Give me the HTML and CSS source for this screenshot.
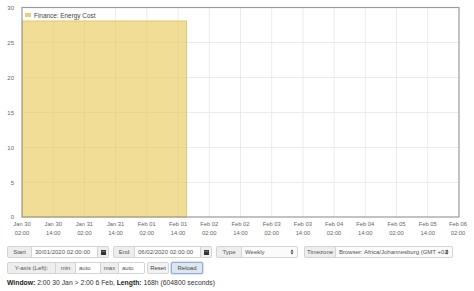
FILE: index.html
```html
<!DOCTYPE html>
<html>
<head>
<meta charset="utf-8">
<link rel="stylesheet" href="styles.css">
</head>
<body>
<svg class="chart" width="474" height="242" viewBox="0 0 474 242">
  <g class="grid">
    <line x1="53.2" y1="7" x2="53.2" y2="217"/><line x1="84.4" y1="7" x2="84.4" y2="217"/>
    <line x1="115.6" y1="7" x2="115.6" y2="217"/><line x1="146.8" y1="7" x2="146.8" y2="217"/>
    <line x1="178.1" y1="7" x2="178.1" y2="217"/><line x1="209.3" y1="7" x2="209.3" y2="217"/>
    <line x1="240.5" y1="7" x2="240.5" y2="217"/><line x1="271.7" y1="7" x2="271.7" y2="217"/>
    <line x1="302.9" y1="7" x2="302.9" y2="217"/><line x1="334.1" y1="7" x2="334.1" y2="217"/>
    <line x1="365.3" y1="7" x2="365.3" y2="217"/><line x1="396.5" y1="7" x2="396.5" y2="217"/>
    <line x1="427.7" y1="7" x2="427.7" y2="217"/>
    <line x1="22" y1="42.5" x2="459" y2="42.5"/><line x1="22" y1="77.5" x2="459" y2="77.5"/>
    <line x1="22" y1="112.5" x2="459" y2="112.5"/><line x1="22" y1="147.5" x2="459" y2="147.5"/>
    <line x1="22" y1="182.5" x2="459" y2="182.5"/>
  </g>
  <rect class="bar" x="22.5" y="21" width="164" height="196"/>
  <rect class="frame" x="22" y="7.5" width="437" height="209.5"/>
  <g class="legend">
    <rect class="legend-bg" x="23" y="9" width="68" height="11"/>
    <rect class="legend-swatch" x="25" y="13" width="6" height="4"/>
    <text class="legend-text" x="34" y="15.3">Finance: Energy Cost</text>
  </g>
  <g class="ylabels">
    <text x="14" y="8">30</text><text x="14" y="43">25</text><text x="14" y="78">20</text>
    <text x="14" y="113">15</text><text x="14" y="148">10</text><text x="14" y="183">5</text>
    <text x="14" y="217">0</text>
  </g>
  <g class="xlabels">
    <text x="22" y="224">Jan 30</text><text x="22" y="233">02:00</text>
    <text x="53.2" y="224">Jan 30</text><text x="53.2" y="233">14:00</text>
    <text x="84.4" y="224">Jan 31</text><text x="84.4" y="233">02:00</text>
    <text x="115.6" y="224">Jan 31</text><text x="115.6" y="233">14:00</text>
    <text x="146.8" y="224">Feb 01</text><text x="146.8" y="233">02:00</text>
    <text x="178.1" y="224">Feb 01</text><text x="178.1" y="233">14:00</text>
    <text x="209.3" y="224">Feb 02</text><text x="209.3" y="233">02:00</text>
    <text x="240.5" y="224">Feb 02</text><text x="240.5" y="233">14:00</text>
    <text x="271.7" y="224">Feb 03</text><text x="271.7" y="233">02:00</text>
    <text x="302.9" y="224">Feb 03</text><text x="302.9" y="233">14:00</text>
    <text x="334.1" y="224">Feb 04</text><text x="334.1" y="233">02:00</text>
    <text x="365.3" y="224">Feb 04</text><text x="365.3" y="233">14:00</text>
    <text x="396.5" y="224">Feb 05</text><text x="396.5" y="233">02:00</text>
    <text x="427.7" y="224">Feb 05</text><text x="427.7" y="233">14:00</text>
    <text x="458" y="224">Feb 06</text><text x="458" y="233">02:00</text>
  </g>
</svg>
<div class="controls">
  <div class="row">
    <div class="group">
      <span class="addon w-start">Start</span>
      <span class="field w-date">30/01/2020 02:00:00</span>
      <span class="addon icon-btn"><svg width="5" height="5" viewBox="0 0 5 5"><rect x="0" y="0" width="5" height="5" fill="#333"/><rect x="0.5" y="1.5" width="4" height="0.4" fill="#ccc"/></svg></span>
    </div>
    <div class="group">
      <span class="addon w-end">End</span>
      <span class="field w-date">06/02/2020 02:00:00</span>
      <span class="addon icon-btn"><svg width="5" height="5" viewBox="0 0 5 5"><rect x="0" y="0" width="5" height="5" fill="#333"/><rect x="0.5" y="1.5" width="4" height="0.4" fill="#ccc"/></svg></span>
    </div>
    <div class="group g-type">
      <span class="addon w-type">Type</span>
      <span class="field select w-weekly">Weekly<svg class="arrows" width="4" height="6" viewBox="0 0 4 6"><path d="M0.5 2.4 L2 0.6 L3.5 2.4 Z M0.5 3.6 L2 5.4 L3.5 3.6 Z" fill="#333"/></svg></span>
    </div>
    <div class="group g-tz">
      <span class="addon w-tz">Timezone</span>
      <span class="field select w-tzsel">Browser: Africa/Johannesburg (GMT +02<svg class="arrows" width="4" height="6" viewBox="0 0 4 6"><path d="M0.5 2.4 L2 0.6 L3.5 2.4 Z M0.5 3.6 L2 5.4 L3.5 3.6 Z" fill="#333"/></svg></span>
    </div>
  </div>
  <div class="row">
    <div class="group">
      <span class="addon w-yaxis">Y-axis (Left):</span>
      <span class="addon w-min">min</span>
      <span class="field w-auto1">auto</span>
      <span class="addon w-max">max</span>
      <span class="field w-auto2">auto</span>
    </div>
    <span class="btn w-reset">Reset</span>
    <span class="btn btn-active w-reload">Reload</span>
  </div>
  <p class="window"><b>Window:</b> 2:00 30 Jan &gt; 2:00 6 Feb, <b>Length:</b> 168h (604800 seconds)</p>
</div>
</body>
</html>
```
FILE: styles.css
```css
html, body {
  margin: 0;
  padding: 0;
  background: #fff;
  font-family: "Liberation Sans", Arial, sans-serif;
}
.chart {
  display: block;
}
.grid line {
  stroke: #e6e6e6;
  stroke-width: 0.8;
}
.bar {
  fill: #e8c44a;
  fill-opacity: 0.58;
  stroke: #e6c866;
  stroke-width: 1;
}
.frame {
  fill: none;
  stroke: #9a9a9a;
  stroke-width: 1.2;
}
.legend-bg {
  fill: #fff;
  opacity: 0.85;
}
.legend-swatch {
  fill: #e6cf7c;
}
.legend-text {
  font-size: 6.4px;
  fill: #444;
  dominant-baseline: central;
}
.ylabels text {
  font-size: 6px;
  fill: #666;
  text-anchor: end;
  dominant-baseline: central;
}
.xlabels text {
  font-size: 5.8px;
  fill: #666;
  text-anchor: middle;
  dominant-baseline: central;
}
.controls {
  padding: 4px 0 0 7px;
  font-size: 6px;
  color: #555;
}
.row {
  display: flex;
  align-items: center;
  height: 12px;
  margin-bottom: 4px;
}
.group {
  display: flex;
  height: 12px;
  margin-right: 4px;
}
.g-type {
  margin-right: 6px;
}
.addon, .field, .btn {
  box-sizing: border-box;
  height: 12px;
  display: flex;
  align-items: center;
  border: 1px solid #d4d4d4;
  white-space: nowrap;
  overflow: hidden;
}
.addon {
  background: #eeeeee;
  justify-content: center;
  color: #555;
}
.group .addon + .field,
.group .field + .addon,
.group .addon + .addon {
  margin-left: -1px;
}
.group > :first-child {
  border-radius: 2px 0 0 2px;
}
.group > :last-child {
  border-radius: 0 2px 2px 0;
}
.field {
  background: #fff;
  padding-left: 3px;
  color: #555;
}
.select {
  position: relative;
  background: #fbfbfb;
  border-radius: 2px;
}
.arrows {
  position: absolute;
  right: 3px;
  top: 2px;
}
.icon-btn {
  width: 12px;
}
.btn {
  background: #f2f2f2;
  justify-content: center;
  border-radius: 2px;
  margin-right: 2px;
  color: #444;
}
.btn-active {
  background: #dfe6ee;
  border-color: #8fb0d8;
  box-shadow: 0 0 0 0.6px #b9cde6;
}
.w-start { width: 25px; }
.w-date { width: 67px; }
.w-end { width: 22px; }
.w-type { width: 26px; }
.w-weekly { width: 57px; }
.w-tz { width: 32px; }
.w-tzsel { width: 118px; padding-right: 8px; }
.w-yaxis { width: 49px; }
.w-min { width: 21px; }
.w-auto1 { width: 26px; }
.w-max { width: 19px; }
.w-auto2 { width: 27px; }
.w-reset { width: 22px; margin-left: -2px; }
.w-reload { width: 32px; }
.window {
  margin: 3px 0 0 0;
  font-size: 6.8px;
  line-height: 9px;
  color: #333;
}
.window b {
  color: #222;
}
```
